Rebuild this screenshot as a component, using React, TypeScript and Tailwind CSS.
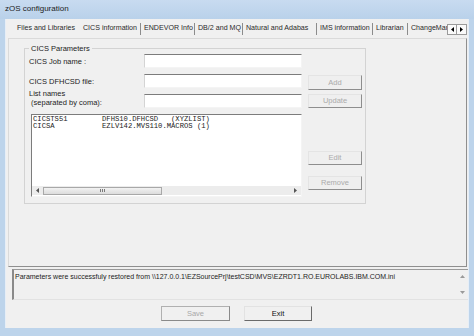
const tabs = [
  { label: 'Files and Libraries', w: 'w-[66px]', sep: false },
  { label: 'CICS information', w: 'w-[61px]', sep: true },
  { label: 'ENDEVOR Info', w: 'w-[54px]', sep: true },
  { label: 'DB/2 and MQ', w: 'w-[48px]', sep: true },
  { label: 'Natural and Adabas', w: 'w-[74px]', sep: true },
  { label: 'IMS information', w: 'w-[56px]', sep: true },
  { label: 'Librarian', w: 'w-[35px]', sep: true },
  { label: 'ChangeMan', w: 'w-[39px]', sep: false },
];

function SideButton({ label, className }: { label: string; className: string }) {
  return (
    <div
      className={`w-[54px] flex items-center justify-center border border-t-[#e4e4e4] border-l-[#e4e4e4] border-r-[#8e8e8e] border-b-[#8e8e8e] bg-[#efefef] text-[7.5px] leading-none text-[#ababab] ${className}`}
    >
      {label}
    </div>
  );
}

function Field({ label, className = '' }: { label: React.ReactNode; className?: string }) {
  return (
    <div className={`flex items-center h-[14px] ${className}`}>
      <div className="w-[115px] text-[7.5px] leading-[9px]">{label}</div>
      <div className="w-[158px] h-[14px] bg-white border border-t-[#7c7c7c] border-l-[#d4d4d4] border-r-[#f4f4f4] border-b-[#f4f4f4]" />
    </div>
  );
}

function Arrow({ dir }: { dir: 'left' | 'right' | 'up' | 'down' }) {
  const pts = {
    left: '3,0 0,2.5 3,5',
    right: '0,0 3,2.5 0,5',
    up: '0,3 2.5,0 5,3',
    down: '0,0 2.5,3 5,0',
  }[dir];
  const vertical = dir === 'up' || dir === 'down';
  return (
    <svg width={vertical ? 5 : 3} height={vertical ? 3 : 5} viewBox={vertical ? '0 0 5 3' : '0 0 3 5'}>
      <polygon points={pts} fill="currentColor" />
    </svg>
  );
}

export default function App() {
  return (
    <div className="w-[474px] h-[336px] overflow-hidden flex flex-col bg-[#bdd4eb] font-['Liberation_Sans',Arial,sans-serif] text-[#1c1c1c]">
      <div className="h-[19px] shrink-0 flex items-center pl-[5px] pb-[2px] text-[8px] bg-[linear-gradient(#c8dbf0,#b9d1ea)]">
        zOS configuration
      </div>

      <div className="mx-[5px] mb-[8px] flex-1 flex flex-col bg-[#f0f0f0] border-l border-r border-[#e6eef7]">
        {/* tab strip */}
        <div className="mt-[4px] h-[12px] flex items-center pl-[8px]">
          {tabs.map((t) => (
            <div
              key={t.label}
              className={`${t.w} h-[12px] shrink-0 flex items-center overflow-hidden whitespace-nowrap text-[7.1px] leading-none pl-[3px] text-[#2a2a2a] ${
                t.sep ? 'border-r border-[#8c8c8c]' : ''
              }`}
            >
              {t.label}
            </div>
          ))}
          <div className="flex h-[11px]">
            <div className="w-[10px] h-[11px] flex items-center justify-center border border-[#9a9a9a] bg-[#fafafa] text-black">
              <Arrow dir="left" />
            </div>
            <div className="w-[10px] h-[11px] flex items-center justify-center border border-l-0 border-[#9a9a9a] bg-[#fafafa] text-black">
              <Arrow dir="right" />
            </div>
          </div>
        </div>

        {/* tab panel */}
        <div className="mt-[3px] ml-[2px] w-[459px] h-[229px] shrink-0 border border-t-[#dadada] border-l-[#dadada] border-r-[#8f8f8f] border-b-[#8f8f8f] pt-[9px] pl-[15px]">
          <div className="relative w-[342px] h-[156px] border border-[#d3d3d3] flex">
            <span className="absolute -top-[5px] left-[4px] px-[2px] bg-[#f0f0f0] text-[7.5px] leading-[9px]">
              CICS Parameters
            </span>

            <div className="pl-[4px] pt-[5px] w-[278px] flex flex-col">
              <Field label="CICS Job name :" />
              <Field label="CICS DFHCSD file:" className="mt-[6px]" />
              <Field
                className="mt-[6px]"
                label={
                  <div className="-mt-[6px]">
                    List names
                    <br />
                    &nbsp;(separated by coma):
                  </div>
                }
              />
              <div className="mt-[6px] ml-[2px] w-[271px] h-[83px] bg-white border border-t-[#7c7c7c] border-l-[#7c7c7c] border-r-[#f4f4f4] border-b-[#f4f4f4] flex flex-col">
                <div className="flex-1 pl-[1px] pt-[1px] font-['Liberation_Mono','Courier_New',monospace] text-[7.2px] leading-[7px] whitespace-pre text-[#222]">
                  <div>{'CICSTS51        DFHS10.DFHCSD   (XYZLIST)'}</div>
                  <div>{'CICSA           EZLV142.MVS110.MACROS (1)'}</div>
                </div>
                <div className="h-[9px] mb-[1px] flex items-center bg-[#ececec] text-[#555]">
                  <div className="w-[11px] flex justify-center">
                    <Arrow dir="left" />
                  </div>
                  <div className="w-[119px] h-[8px] border border-[#a8a8a8] bg-[linear-gradient(#f2f2f2,#dcdcdc)] flex items-center justify-center">
                    <div className="flex gap-[1px]">
                      <div className="w-px h-[3px] bg-[#7a7a7a]" />
                      <div className="w-px h-[3px] bg-[#7a7a7a]" />
                      <div className="w-px h-[3px] bg-[#7a7a7a]" />
                    </div>
                  </div>
                  <div className="flex-1" />
                  <div className="w-[11px] flex justify-center">
                    <Arrow dir="right" />
                  </div>
                </div>
              </div>
            </div>

            <div className="ml-[5px] pt-[26px] flex flex-col">
              <SideButton label="Add" className="h-[15px]" />
              <SideButton label="Update" className="mt-[4px] h-[14px]" />
              <SideButton label="Edit" className="mt-[43px] h-[14px]" />
              <SideButton label="Remove" className="mt-[11px] h-[14px]" />
            </div>
          </div>
        </div>

        {/* message box */}
        <div className="mt-[2px] ml-[6px] w-[456px] h-[31px] shrink-0 flex border-t border-t-[#9a9a9a] border-l-2 border-l-[#8a8a8a] border-b border-b-[#e2e2e2] bg-[#f0f0f0]">
          <div className="flex-1 pl-[1px] pt-[2px] text-[7px] leading-[9px] whitespace-nowrap overflow-hidden">
            Parameters were successfuly restored from \\127.0.0.1\EZSourcePrj\testCSD\MVS\EZRDT1.RO.EUROLABS.IBM.COM.ini
          </div>
          <div className="w-[12px] flex flex-col items-center justify-between py-[5px] text-[#9a9a9a]">
            <Arrow dir="up" />
            <Arrow dir="down" />
          </div>
        </div>

        {/* bottom buttons */}
        <div className="mt-[6px] flex pl-[155px]">
          <div className="w-[69px] h-[15px] flex items-center justify-center border border-[#b0b0b0] border-r-[#8a8a8a] border-b-[#8a8a8a] text-[7.5px] leading-none text-[#a8a8a8]">
            Save
          </div>
          <div className="ml-[14px] w-[68px] h-[15px] flex items-center justify-center border border-t-[#e2e2e2] border-l-[#e2e2e2] border-r-[#6a6a6a] border-b-[#6a6a6a] text-[7.5px] leading-none text-[#111]">
            Exit
          </div>
        </div>
      </div>
    </div>
  );
}
